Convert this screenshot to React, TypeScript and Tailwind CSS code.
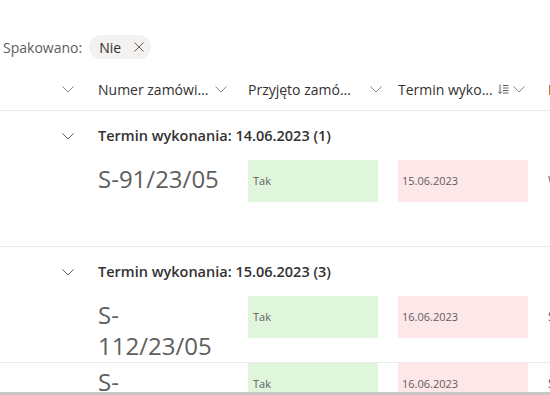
import React from "react";

const Chevron = ({ className = "" }: { className?: string }) => (
  <svg width="12" height="12" viewBox="0 0 12 12" className={className} fill="none" stroke="currentColor" strokeWidth="1">
    <path d="M0.5 3.5 L6 9 L11.5 3.5" />
  </svg>
);

const XIcon = () => (
  <svg width="10" height="10" viewBox="0 0 10 10" fill="none" stroke="currentColor" strokeWidth="1" className="text-[#605e5c]">
    <path d="M0.5 0.5 L9.5 9.5 M9.5 0.5 L0.5 9.5" />
  </svg>
);

const SortIcon = () => (
  <svg width="11" height="11" viewBox="0 0 11 11" fill="none" stroke="currentColor" strokeWidth="1" className="text-[#605e5c]">
    <path d="M2 0.5 V9.5 M0 7.5 L2 9.5 L4 7.5" />
    <path d="M5 1.5 H10.5 M5 4 H10.5 M5 6.5 H10.5 M5 9 H10.5" />
  </svg>
);

type Row = { num: string; h: string; date: string; extra: string };

const DataRow = ({ r }: { r: Row }) => (
  <div className={`flex border-b border-[#edebe9] box-border ${r.h}`}>
    <div className="w-[98px] shrink-0" />
    <div className="w-[150px] shrink-0 pt-[3px]">
      <div className="w-[128px] text-[24px] leading-[31px] text-[#605e5c]">{r.num}</div>
    </div>
    <div className="w-[150px] shrink-0">
      <div className="w-[130px] h-[42px] bg-[#dff6dd] flex items-center pl-[5px] text-[11px] text-[#605e5c]">Tak</div>
    </div>
    <div className="w-[150px] shrink-0">
      <div className="w-[130px] h-[42px] bg-[#fde7e9] flex items-center pl-[4px] text-[11px] text-[#605e5c]">{r.date}</div>
    </div>
    <div className="flex-1 h-[42px] flex items-center whitespace-nowrap text-[12px] text-[#605e5c]">{r.extra}</div>
  </div>
);

const GroupHeader = ({ label }: { label: string }) => (
  <div className="h-[49px] flex items-center">
    <div className="w-[98px] shrink-0 pl-[62px] flex items-center text-[#605e5c]">
      <Chevron />
    </div>
    <div className="text-[14.5px] font-semibold text-[#323130] whitespace-nowrap">{label}</div>
  </div>
);

export default function App() {
  return (
    <div className="w-[550px] h-[395px] overflow-hidden relative bg-white font-['Open_Sans',sans-serif]">
      <div className="h-[68px] pt-[35px] flex items-start">
        <div className="h-[24px] flex items-center pl-[3px] text-[14px] text-[#605e5c]">Spakowano:</div>
        <div className="ml-[7px] h-[24px] w-[62px] rounded-full bg-[#f3f2f1] flex items-center pl-[10px] gap-[13px] text-[14px] text-[#323130]">
          <span>Nie</span>
          <XIcon />
        </div>
      </div>

      <div className="h-[43px] border-b border-[#edebe9] box-border flex items-center whitespace-nowrap text-[14px] text-[#323130]">
        <div className="w-[98px] shrink-0 pl-[62px] flex items-center text-[#8a8886]">
          <Chevron />
        </div>
        <div className="w-[150px] shrink-0 flex items-center">
          <span className="w-[117px]">Numer zamówi...</span>
          <span className="text-[#8a8886] flex"><Chevron /></span>
        </div>
        <div className="w-[150px] shrink-0 flex items-center">
          <span className="w-[122px]">Przyjęto zamó...</span>
          <span className="text-[#8a8886] flex"><Chevron /></span>
        </div>
        <div className="w-[150px] shrink-0 flex items-center">
          <span className="w-[100px]">Termin wyko...</span>
          <span className="flex"><SortIcon /></span>
          <span className="ml-[4px] text-[#8a8886] flex"><Chevron /></span>
        </div>
        <div className="flex-1">Informacje</div>
      </div>

      <GroupHeader label="Termin wykonania: 14.06.2023 (1)" />
      <DataRow r={{ num: "S-91/23/05", h: "h-[87px]", date: "15.06.2023", extra: "Wysłano" }} />
      <GroupHeader label="Termin wykonania: 15.06.2023 (3)" />
      <DataRow r={{ num: "S-112/23/05", h: "h-[67px]", date: "16.06.2023", extra: "Spakowano" }} />
      <DataRow r={{ num: "S-113/23/05", h: "h-[67px]", date: "16.06.2023", extra: "Spakowano" }} />

      <div className="absolute left-0 right-0 bottom-0 h-[3px] bg-[#c8c6c4]" />
    </div>
  );
}
